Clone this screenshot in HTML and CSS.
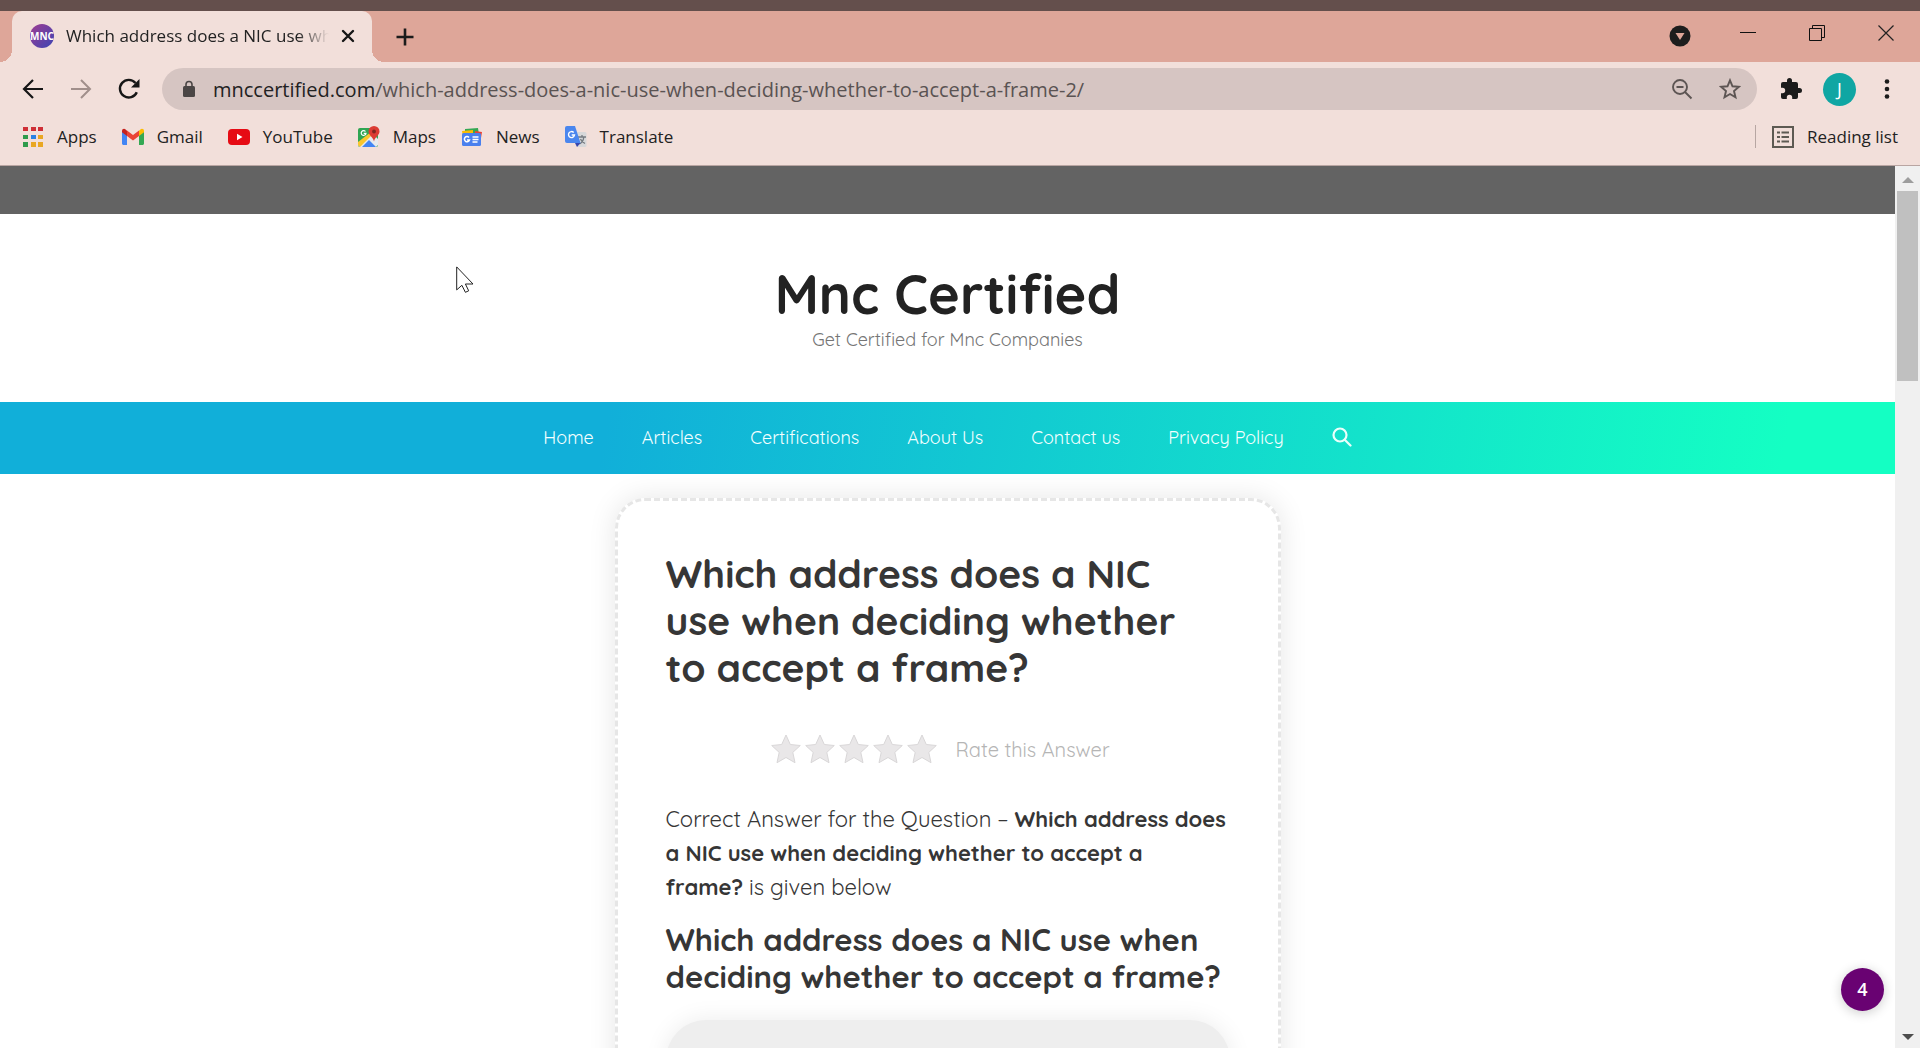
FILE: index.html
```html
<!DOCTYPE html>
<html lang="en">
<head>
<meta charset="utf-8">
<title>Which address does a NIC use when deciding whether to accept a frame?</title>
<link rel="stylesheet" href="styles.css">
</head>
<body>
<header class="browser">
  <div class="tabstrip">
    <div class="tab">
      <svg class="favicon" viewBox="0 0 24 24"><defs><linearGradient id="fav" x1="0" x2="1" y1="0" y2="1"><stop offset="0" stop-color="#a03c92"/><stop offset="1" stop-color="#3b45b4"/></linearGradient></defs><circle cx="12" cy="12" r="12" fill="url(#fav)"/><text x="12" y="16" text-anchor="middle" class="favicon-text">MNC</text></svg>
      <span class="tab-title">Which address does a NIC use wh</span>
      <button class="icon-button" aria-label="Close tab"><svg width="14" height="14" viewBox="0 0 14 14"><path d="M2 2l10 10M12 2L2 12" stroke="#161616" stroke-width="2.4" stroke-linecap="round"/></svg></button>
    </div>
    <button class="icon-button new-tab" aria-label="New tab"><svg width="20" height="20" viewBox="0 0 20 20"><path d="M10 1.5v17M1.500 10h17" stroke="#1b1b1b" stroke-width="2.600"/></svg></button>
    <div class="window-buttons">
      <button class="icon-button tab-search" aria-label="Search tabs"><svg width="22" height="22" viewBox="0 0 22 22"><circle cx="11" cy="11" r="10.500" fill="#1d1d1d"/><path d="M6.500 8h9L11 15z" fill="#dea699"/></svg></button>
      <button class="icon-button" aria-label="Minimize"><svg width="16" height="16" viewBox="0 0 16 16"><path d="M0 7.500h16" stroke="#111" stroke-width="1"/></svg></button>
      <button class="icon-button" aria-label="Restore"><svg width="16" height="16" viewBox="0 0 16 16" fill="none" stroke="#111"><path d="M.5 3.500h12v12H.5zM3.500 3.500v-3h12v12h-3"/></svg></button>
      <button class="icon-button" aria-label="Close"><svg width="16" height="16" viewBox="0 0 16 16"><path d="M.5.5l15 15M15.500.5l-15 15" stroke="#222" stroke-width="1.200"/></svg></button>
    </div>
  </div>
  <div class="toolbar">
    <div class="history">
      <button class="icon-button" aria-label="Back"><svg width="22" height="22" viewBox="0 0 22 22" fill="none" stroke="#161616" stroke-width="2.200"><path d="M21 11H2.500M11 2L2 11l9 9"/></svg></button>
      <button class="icon-button" aria-label="Forward"><svg width="22" height="22" viewBox="0 0 22 22" fill="none" stroke="#a18f8b" stroke-width="2"><path d="M1 11h18.500M11 2l9 9-9 9"/></svg></button>
      <button class="icon-button" aria-label="Reload"><svg width="22" height="22" viewBox="0 0 22 22"><path d="M18.800 14.200A8.800 8.800 0 1 1 17.500 5" fill="none" stroke="#161616" stroke-width="2.400"/><path d="M21.500 1v8.500H13z" fill="#161616"/></svg></button>
    </div>
    <div class="omnibox">
      <svg width="14" height="18" viewBox="0 0 14 18"><rect x="1" y="6" width="12" height="11" rx="1.500" fill="#4b4645"/><path d="M4 7V4.500a3 3 0 0 1 6 0V7" fill="none" stroke="#4b4645" stroke-width="1.600"/></svg>
      <span class="url"><span class="host">mnccertified.com</span>/which-address-does-a-nic-use-when-deciding-whether-to-accept-a-frame-2/</span>
      <button class="icon-button" aria-label="Zoom"><svg width="22" height="22" viewBox="0 0 22 22" fill="none" stroke="#5d5553" stroke-width="1.900"><circle cx="9" cy="9" r="7"/><path d="M5.500 9h7M14 14l6.500 6.500" /></svg></button>
      <button class="icon-button" aria-label="Bookmark"><svg width="22" height="22" viewBox="0 0 22 22"><path d="M11 2.300l2.500 6 6.400.5-4.900 4.200 1.500 6.300L11 16l-5.500 3.300L7 13 2.100 8.800l6.400-.5z" fill="none" stroke="#5d5553" stroke-width="1.900"/></svg></button>
    </div>
    <div class="actions">
      <button class="icon-button" aria-label="Extensions"><svg width="24" height="24" viewBox="0 0 24 24"><path d="M20.500 11H19V7a2 2 0 0 0-2-2h-4V3.500a2.500 2.500 0 0 0-5 0V5H4a2 2 0 0 0-2 2v3.800h1.500a2.700 2.700 0 0 1 0 5.400H2V20a2 2 0 0 0 2 2h3.800v-1.500a2.700 2.700 0 0 1 5.400 0V22H17a2 2 0 0 0 2-2v-4h1.500a2.500 2.500 0 0 0 0-5z" fill="#1b1b1b"/></svg></button>
      <button class="avatar" aria-label="Profile">J</button>
      <button class="icon-button" aria-label="Menu"><svg width="6" height="22" viewBox="0 0 6 22" fill="#1b1b1b"><circle cx="3" cy="3.500" r="2.300"/><circle cx="3" cy="11" r="2.300"/><circle cx="3" cy="18.500" r="2.300"/></svg></button>
    </div>
  </div>
  <nav class="bookmarks" aria-label="Bookmarks">
    <a href="#"><svg class="mark" viewBox="0 0 22 22"><path fill="#cf2f36" d="M1 1h5v4H1zM9 1h5v4H9zM16 1h5v4h-5z"/><path fill="#2f9b4c" d="M1 9h5v4H1zM1 16h5v5H1zM9 16h5v5H9z"/><path fill="#2a82e4" d="M9 9h5v4H9z"/><path fill="#e9a723" d="M16 9h5v4h-5zM16 16h5v5h-5zM9 16h5v5H9z"/></svg>Apps</a>
    <a href="#"><svg class="mark" viewBox="0 0 22 22"><path fill="#4285f4" d="M0 5v12.500c0 .8.700 1.500 1.500 1.500H5V9z"/><path fill="#34a853" d="M22 5v12.500c0 .8-.7 1.500-1.500 1.500H17V9z"/><path fill="#fbbc04" d="M17 4.700V10l5-3.700V5c0-2-2-3-3.600-1.600z"/><path fill="#c5221f" d="M0 5v1.300L5 10V4.700L3.600 3.400C2 2 0 3 0 5z"/><path fill="#ea4335" d="M5 10V4.500L11 9l6-4.500V10l-6 4.500z"/></svg>Gmail</a>
    <a href="#"><svg class="mark" viewBox="0 0 22 22"><rect y="3" width="22" height="16" rx="4" fill="#e60b14"/><path d="M9 7.800v6.400l5.500-3.200z" fill="#fff"/></svg>YouTube</a>
    <a href="#"><svg class="mark" viewBox="0 0 22 22"><rect y="2" width="20" height="19" rx="2" fill="#2fa552"/><path d="M0 19L14 7l6 6v6l-2 2H2z" fill="#e8eaed"/><path d="M4 21l7-7 7 7z" fill="#4285f4"/><path d="M0 16v3l2 2L15 8l-2-2z" fill="#fbc62d"/><path d="M16 0a5.500 5.500 0 0 0-5.500 5.500c0 4 4.500 5 5.500 10 1-5 5.500-6 5.500-10A5.500 5.500 0 0 0 16 0z" fill="#dc3b33"/><circle cx="16" cy="5.500" r="1.900" fill="#80261f"/><path d="M7.500 5.500A2.400 2.400 0 1 0 8 7.300H5.700" fill="none" stroke="#fff" stroke-width="1.200"/></svg>Maps</a>
    <a href="#"><svg class="mark" viewBox="0 0 22 22"><path d="M4 3l13-1 1 7H4z" fill="#34a853"/><path d="M1 5l11-1v7H2z" fill="#fbbc04"/><path d="M14 5l7 1-2 12-5-1z" fill="#ea4335"/><rect x="1" y="7" width="19" height="13" rx="1.500" fill="#4a80ee"/><path d="M8 11.500A2.600 2.600 0 1 0 8.500 14H6M11.500 11h6M11.500 13.500h6M11.500 16h5" stroke="#fff" stroke-width="1.500" fill="none"/></svg>News</a>
    <a href="#"><svg class="mark" viewBox="0 0 22 22"><path d="M9 6h11a1.500 1.500 0 0 1 1.500 1.500v12A1.500 1.500 0 0 1 20 21h-8z" fill="#d7d8da"/><path d="M13 11h8M17 9v2M14.500 18c3-1.500 4-4 4.300-7M15.500 13c.7 2 2 3.500 4.500 4.500" stroke="#747a80" stroke-width="1.300" fill="none"/><path d="M2 0h8l5.500 17H2a2 2 0 0 1-2-2V2a2 2 0 0 1 2-2z" fill="#4a86ee"/><path d="M10 17h5.500L12 21z" fill="#3646ae"/><path d="M8.700 6.500A3 3 0 1 0 9.500 9H6.700" stroke="#fff" stroke-width="1.400" fill="none"/></svg>Translate</a>
    <a class="reading" href="#"><svg class="mark" viewBox="0 0 22 22" fill="none" stroke="#5d5a52" stroke-width="2"><path d="M1 1h20v20H1z"/><path d="M5 6.500h3M5 11h3M5 15.500h3M9.500 6.500H17M9.500 11H17M9.500 15.500H17"/></svg>Reading list</a>
  </nav>
</header>
<div class="viewport">
  <div class="page">
    <div class="topbar"></div>
    <header class="masthead">
      <a class="site-title" href="#">Mnc Certified</a>
      <p class="tagline">Get Certified for Mnc Companies</p>
    </header>
    <nav class="menu" aria-label="Main">
      <a href="#">Home</a><a href="#">Articles</a><a href="#">Certifications</a><a href="#">About Us</a><a href="#">Contact us</a><a href="#">Privacy Policy</a>
      <button class="icon-button" aria-label="Search"><svg width="20" height="20" viewBox="0 0 20 20" fill="none" stroke="#eafffb" stroke-width="2.200" stroke-linecap="round"><circle cx="8" cy="8" r="6.500"/><path d="M13 13l5.500 5.500"/></svg></button>
    </nav>
    <main class="card">
      <h1>Which address does a NIC<br>use when deciding whether<br>to accept a frame?</h1>
      <div class="rating">
        <div class="stars">
          <button class="icon-button" aria-label="1 star"><svg class="star" viewBox="0 0 30 30"><path d="M15 1l4.300 9.500 10 1-7.500 6.900 2.200 10.300L15 23.500l-9 5.200 2.200-10.300L.7 11.500l10-1z"/></svg></button>
          <button class="icon-button" aria-label="2 stars"><svg class="star" viewBox="0 0 30 30"><path d="M15 1l4.300 9.500 10 1-7.500 6.900 2.200 10.300L15 23.500l-9 5.200 2.200-10.300L.7 11.500l10-1z"/></svg></button>
          <button class="icon-button" aria-label="3 stars"><svg class="star" viewBox="0 0 30 30"><path d="M15 1l4.300 9.500 10 1-7.500 6.900 2.200 10.300L15 23.500l-9 5.200 2.200-10.300L.7 11.500l10-1z"/></svg></button>
          <button class="icon-button" aria-label="4 stars"><svg class="star" viewBox="0 0 30 30"><path d="M15 1l4.300 9.500 10 1-7.500 6.900 2.200 10.300L15 23.500l-9 5.200 2.200-10.300L.7 11.500l10-1z"/></svg></button>
          <button class="icon-button" aria-label="5 stars"><svg class="star" viewBox="0 0 30 30"><path d="M15 1l4.300 9.500 10 1-7.500 6.900 2.200 10.300L15 23.500l-9 5.200 2.200-10.300L.7 11.500l10-1z"/></svg></button>
        </div>
        <span>Rate this Answer</span>
      </div>
      <p class="lead">Correct Answer for the Question – <strong>Which address does<br>a NIC use when deciding whether to accept a<br>frame?</strong> is given below</p>
      <h2>Which address does a NIC use when<br>deciding whether to accept a frame?</h2>
      <div class="answer"></div>
    </main>
  </div>
  <div class="scrollbar">
    <svg class="arrow" viewBox="0 0 12 6"><path d="M0 6l6-6 6 6z" fill="#9d9d9d"/></svg>
    <div class="thumb"></div>
    <svg class="arrow arrow-down" viewBox="0 0 12 6"><path d="M0 0l6 6 6-6z" fill="#4d4d4d"/></svg>
  </div>
  <button class="badge">4</button>
</div>
<svg class="cursor" viewBox="0 0 18 27"><path d="M.7.9v23l5.200-4.600 3.500 7 3.300-1.500-3.300-6.800H17z" fill="#fff" stroke="#222"/></svg>
</body>
</html>
```
FILE: styles.css
```css
* { box-sizing: border-box; }

body {
  margin: 0;
  height: 100vh;
  display: flex;
  flex-direction: column;
  overflow: hidden;
  background: #fff;
  font-family: "Open Sans", sans-serif;
  color: #363636;
}

a { color: inherit; text-decoration: none; }
svg { display: block; flex: none; }

.icon-button {
  display: flex;
  padding: 0;
  border: 0;
  background: none;
}

/* Browser chrome */
.browser {
  flex: none;
  background: #f2dfda;
  border-top: 11px solid #644f4c;
  border-bottom: 1px solid #b9a5a2;
  font-size: 17px;
  color: #222;
}

.tabstrip {
  display: flex;
  align-items: center;
  height: 51px;
  padding-left: 12px;
  background: #dea699;
}

.tab {
  position: relative;
  display: flex;
  align-items: center;
  gap: 12px;
  width: 360px;
  height: 51px;
  padding: 0 17px 2px 18px;
  border-radius: 10px 10px 0 0;
  background: #f2dfda;
}

.tab::before,
.tab::after {
  content: "";
  position: absolute;
  bottom: 0;
  width: 12px;
  height: 12px;
}
.tab::before { left: -12px; background: radial-gradient(circle at 0 0, #dea699 12px, #f2dfda 12px); }
.tab::after { right: -12px; background: radial-gradient(circle at 100% 0, #dea699 12px, #f2dfda 12px); }

.favicon { width: 24px; height: 24px; }
.favicon-text { font: bold 10px "Open Sans", sans-serif; fill: #fff; }

.tab-title {
  flex: 1;
  overflow: hidden;
  white-space: nowrap;
  -webkit-mask-image: linear-gradient(90deg, #000 88%, transparent);
  mask-image: linear-gradient(90deg, #000 88%, transparent);
}

.new-tab { margin-left: 23px; }

.window-buttons {
  display: flex;
  align-items: center;
  gap: 53px;
  margin-left: auto;
  padding: 0 26px 8px 0;
}
.tab-search { padding-top: 6px; margin-right: -4px; }

.toolbar {
  display: flex;
  align-items: center;
  gap: 22px;
  padding: 6px 30px 0 22px;
}

.history { display: flex; gap: 26px; }

.omnibox {
  flex: 1;
  display: flex;
  align-items: center;
  gap: 26px;
  height: 42px;
  padding: 0 16px 0 20px;
  border-radius: 21px;
  background: #d6c5c2;
}

.url {
  flex: 1;
  margin-left: -9px;
  overflow: hidden;
  white-space: nowrap;
  font-size: 20px;
  color: #5a5352;
}
.host { color: #222; }

.actions { display: flex; align-items: center; gap: 20px; }
.actions > :last-child { margin-left: 8px; }

.avatar {
  width: 33px;
  height: 33px;
  padding: 0;
  border: 0;
  border-radius: 50%;
  background: #10a6a3;
  color: #fff;
  font: 18px "Open Sans", sans-serif;
}

.bookmarks {
  display: flex;
  align-items: center;
  gap: 25px;
  height: 55px;
  padding: 0 22px 2px;
}
.bookmarks a { display: flex; align-items: center; gap: 13px; white-space: nowrap; }
.mark { width: 22px; height: 22px; }
.reading { margin-left: auto; padding-left: 16px; border-left: 1px solid #b7a6a2; }

/* Page */
.viewport {
  position: relative;
  flex: 1;
  display: flex;
  min-height: 0;
}

.page {
  flex: 1;
  overflow: hidden;
  font-family: Quicksand, Lato, sans-serif;
  font-variant-ligatures: none;
}

.topbar { height: 48px; background: #636363; }

.masthead {
  display: flex;
  flex-direction: column;
  align-items: center;
  padding: 48px 0 48px;
}
.site-title { font-size: 54px; line-height: 64px; font-weight: 700; color: #222; }
.tagline { margin: 0; font-size: 18px; line-height: 28px; color: #757575; }

.menu {
  display: flex;
  align-items: center;
  justify-content: center;
  gap: 48px;
  height: 72px;
  padding-bottom: 2px;
  background: linear-gradient(100deg, #11afd9 32%, #14ffc3 94%);
  font-size: 18px;
  color: #f4ffff;
}

.card {
  width: 666px;
  height: 700px;
  margin: 24px auto 0;
  padding: 49px 48px 48px;
  border: 3px dashed #e6e6e6;
  border-radius: 30px;
  box-shadow: 0 0 28px rgba(0, 0, 0, .1);
}

h1, h2, .lead { margin: 0; white-space: nowrap; }
h1 { font-size: 39px; line-height: 47px; font-weight: 700; }
h2 { font-size: 31px; line-height: 37px; font-weight: 700; margin-top: 17px; }

.rating {
  display: flex;
  align-items: center;
  justify-content: center;
  gap: 18px;
  height: 32px;
  margin: 42px 0 37px;
  padding-right: 14px;
  font-size: 20px;
  color: #b5b5b5;
}
.stars { display: flex; gap: 4px; }
.star { width: 30px; height: 30px; fill: #e9e7e8; stroke: #d9d7d8; }

.lead { font-size: 22px; line-height: 34px; }

.answer {
  height: 300px;
  margin-top: 25px;
  border-radius: 40px;
  background: #eee;
  box-shadow: 0 0 24px rgba(0, 0, 0, .08);
}

.scrollbar {
  display: flex;
  flex-direction: column;
  align-items: center;
  width: 25px;
  padding: 11px 0 8px;
  background: #f0f0f0;
}
.arrow { width: 12px; height: 6px; }
.arrow-down { margin-top: auto; }
.thumb { width: 21px; height: 190px; margin-top: 8px; background: #c0c0c0; }

.badge {
  position: absolute;
  right: 36px;
  bottom: 37px;
  width: 43px;
  height: 43px;
  padding: 0 0 2px;
  border: 0;
  border-radius: 50%;
  background: #690272;
  box-shadow: 0 2px 12px rgba(0, 0, 0, .2);
  color: #fff;
  font: 600 18px "Open Sans", sans-serif;
}

.cursor { position: absolute; left: 456px; top: 266px; width: 18px; height: 27px; }
```
